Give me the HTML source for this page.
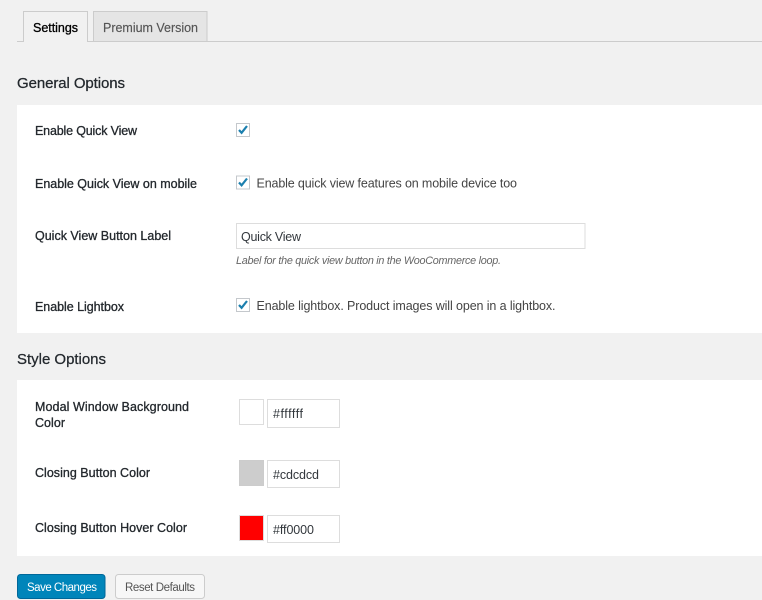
<!DOCTYPE html>
<html><head><meta charset="utf-8"><title>Settings</title>
<style>
html,body{margin:0;padding:0;width:762px;height:600px;overflow:hidden;background:#f1f1f1}
svg{display:block;filter:blur(.35px)}
text{font-family:"Liberation Sans",Arial,sans-serif;white-space:pre}
.l{font-size:12.5px;fill:#23282d;stroke:#23282d;stroke-width:.3px}
.h{font-size:15px;fill:#23282d;stroke:#23282d;stroke-width:.25px}
.t{font-size:12.5px;fill:#444}
.v{font-size:12.5px;fill:#32373c}
</style></head><body>
<svg width="762" height="600" viewBox="0 0 762 600" xmlns="http://www.w3.org/2000/svg">
<rect width="762" height="600" fill="#f1f1f1"/>
<!-- tabs -->
<rect x="17" y="41" width="745" height="1" fill="#ccc"/>
<path d="M23.5 42V11.500H87.500V42" fill="#f1f1f1" stroke="#ccc"/>
<rect x="93.500" y="11.500" width="113.500" height="30" fill="#e5e5e5" stroke="#ccc"/>
<text x="33" y="32" class="l" textLength="45" style="fill:#000;stroke:#000">Settings</text>
<text x="103" y="32" class="t" textLength="95" style="fill:#555;stroke:#555;stroke-width:.15px">Premium Version</text>
<!-- General -->
<text x="17" y="88" class="h" textLength="108">General Options</text>
<rect x="17" y="105" width="745" height="228" fill="#fff"/>
<text x="35" y="135" class="l" textLength="102">Enable Quick View</text>
<text x="35" y="188" class="l" textLength="162">Enable Quick View on mobile</text>
<text x="35" y="240" class="l" textLength="136">Quick View Button Label</text>
<text x="35" y="311" class="l" textLength="89">Enable Lightbox</text>
<!-- checkboxes -->
<g>
<rect x="236.500" y="123.500" width="13" height="13" fill="#fff" stroke="#c4c8cc"/>
<path d="M239 130l2.600 2.800L247 126" fill="none" stroke="#1b7fae" stroke-width="2.200"/>
<rect x="236.500" y="176" width="13" height="13" fill="#fff" stroke="#c4c8cc"/>
<path d="M239 182.500l2.600 2.800L247 178.500" fill="none" stroke="#1b7fae" stroke-width="2.200"/>
<rect x="236.500" y="298.500" width="13" height="13" fill="#fff" stroke="#c4c8cc"/>
<path d="M239 305l2.600 2.800L247 301" fill="none" stroke="#1b7fae" stroke-width="2.200"/>
</g>
<text x="256.500" y="187.500" class="t" textLength="260.500">Enable quick view features on mobile device too</text>
<rect x="236.500" y="223.500" width="348.500" height="25" fill="#fff" stroke="#ddd"/>
<text x="241" y="241" class="v" textLength="60">Quick View</text>
<text x="236" y="264" textLength="265" style="font-size:10.800px;font-style:italic;fill:#666">Label for the quick view button in the WooCommerce loop.</text>
<text x="256.500" y="310" class="t" textLength="299">Enable lightbox. Product images will open in a lightbox.</text>
<!-- Style -->
<text x="17" y="364" class="h" textLength="89">Style Options</text>
<rect x="17" y="380" width="745" height="176" fill="#fff"/>
<text x="35" y="411" class="l" textLength="154">Modal Window Background</text>
<text x="35" y="427" class="l" textLength="30">Color</text>
<text x="35" y="477" class="l" textLength="115">Closing Button Color</text>
<text x="35" y="532" class="l" textLength="152">Closing Button Hover Color</text>
<rect x="239.500" y="399.500" width="24" height="25" fill="#fff" stroke="#ddd"/>
<rect x="267.500" y="399.500" width="72" height="28" fill="#fff" stroke="#ddd"/>
<text x="273" y="418" class="v" textLength="30">#ffffff</text>
<rect x="239.500" y="460.500" width="24" height="25" fill="#cdcdcd" stroke="#ccc"/>
<rect x="267.500" y="460.500" width="72" height="27" fill="#fff" stroke="#ddd"/>
<text x="273" y="479" class="v" textLength="46">#cdcdcd</text>
<rect x="239.500" y="515.500" width="24" height="25" fill="#f00" stroke="#ddd"/>
<rect x="267.500" y="515.500" width="72" height="27" fill="#fff" stroke="#ddd"/>
<text x="273" y="534" class="v" textLength="41">#ff0000</text>
<!-- buttons -->
<rect x="17.500" y="574.500" width="87.500" height="24" rx="3" fill="#0085ba" stroke="#006799"/>
<text x="27" y="591" textLength="70" style="font-size:11.500px;fill:#fff">Save Changes</text>
<rect x="115.500" y="574.500" width="89" height="24" rx="3" fill="#f7f7f7" stroke="#ccc"/>
<text x="125" y="591" textLength="70" style="font-size:11.500px;fill:#555">Reset Defaults</text>
</svg>
</body></html>
